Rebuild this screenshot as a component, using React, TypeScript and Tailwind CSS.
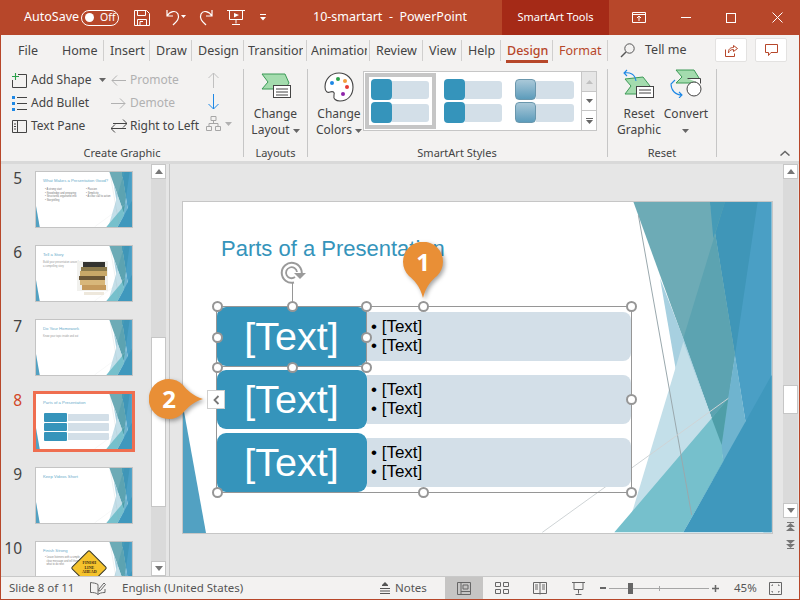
import React from "react";

const z = (pts: number[][]) => pts.map(([x, y]) => `${480 + x / 3},${195 + y / 3}`).join(" ");

function SlideArt() {
  return (
    <svg viewBox="183 202 589 331" preserveAspectRatio="none" className="absolute inset-0 w-full h-full">
      <rect x="183" y="202" width="589" height="331" fill="#fff" />
      <polygon points="183,406 206,533 183,533" fill="#52a1c2" />
      <polygon points={z([[690, 20], [875, 20], [875, 1012], [850, 1012]])} fill="#4a9fc5" />
      <polygon points={z([[690, 20], [833, 20], [765, 480]])} fill="#3f96b8" />
      <polygon points={z([[460, 20], [690, 20], [765, 480], [725, 750]])} fill="#6dabb6" />
      <polygon points={z([[735, 20], [610, 430], [725, 750], [765, 480], [690, 20]])} fill="#5ca3b1" />
      <polygon points={z([[690, 20], [735, 20], [700, 130]])} fill="#469bb7" />
      <polygon points={z([[540, 250], [610, 430], [695, 670], [625, 740], [585, 510]])} fill="#a7d0e0" />
      <polygon points={z([[610, 440], [695, 670], [435, 1012], [460, 940]])} fill="#c3dfe9" />
      <polygon points={z([[765, 480], [808, 750], [730, 800], [722, 750]])} fill="#6fb4cf" />
      <polygon points={z([[403, 1012], [695, 670], [745, 610], [725, 750], [730, 800], [610, 1012]])} fill="#76c0cc" />
      <polygon points={z([[695, 670], [745, 610], [725, 750]])} fill="#4e9ea8" />
      <polygon points={z([[610, 1012], [875, 540], [875, 1012]])} fill="#3f98bd" />
      <line x1={480 + 475 / 3} y1={195 + 60 / 3} x2={480 + 635 / 3} y2={195 + 960 / 3} stroke="#9aa8ad" strokeWidth="1" />
      <line x1={480 + 187 / 3} y1={195 + 1012 / 3} x2={480 + 745 / 3} y2={195 + 610 / 3} stroke="#cfd4d6" strokeWidth="1" />
    </svg>
  );
}

function Thumb({ n, active, children }: { n: number; active?: boolean; children?: React.ReactNode }) {
  return (
    <div className="flex h-[55px] shrink-0 items-start">
      <div className={`w-[21px] text-right text-[15.5px] leading-[20px] -mt-[4px] ${active ? "text-[#d24726]" : "text-[#444]"}`}>{n}</div>
      <div className={`relative ml-[14px] w-[96px] h-[55px] shrink-0 overflow-hidden ${active ? "outline-[3px] outline-[#ef6e50]" : "outline-1 outline-[#c4c4c4]"}`}>
        <SlideArt />
        {children}
      </div>
    </div>
  );
}

const TT = ({ children }: { children: React.ReactNode }) => (
  <div className="absolute left-[7px] top-[6px] text-[4.2px] leading-[6px] whitespace-nowrap text-[#6aaccb] font-['Liberation_Sans',sans-serif]">{children}</div>
);

function Handle({ x, y }: { x: number; y: number }) {
  return (
    <div
      className="absolute w-[11px] h-[11px] rounded-full bg-white border-2 border-[#969696]"
      style={{ left: x - 5.5, top: y - 5.5 }}
    />
  );
}

function Row() {
  return (
    <div className="flex items-center h-[59px]">
      <div className="w-[150px] h-[59px] rounded-[9px] bg-[#3594bb] text-white text-[39.5px] leading-[59px] text-center font-['Liberation_Sans',sans-serif] pb-1 pr-[1px]">
        [Text]
      </div>
      <div className="w-[264px] h-[49px] rounded-r-[8px] bg-[#d3dfe8] text-black text-[17px] leading-[19px] font-['Liberation_Sans',sans-serif] pl-[4px] py-[5px]">
        <div>• [Text]</div>
        <div>• [Text]</div>
      </div>
    </div>
  );
}

function Tab({ w, children, cls = "", sep = true }: { w: number; children: React.ReactNode; cls?: string; sep?: boolean }) {
  return (
    <div className="flex items-center h-[28px] shrink-0" style={{ width: w }}>
      <div className={`flex-1 min-w-0 overflow-hidden whitespace-nowrap pt-[3px] leading-[18px] ${cls}`}>{children}</div>
      {sep && <div className="w-px h-[21px] mt-[3px] bg-[#d0cfce] shrink-0" />}
    </div>
  );
}

function GalleryThumb({ grad, w = 58 }: { grad?: boolean; w?: number }) {
  const blue = grad
    ? "bg-gradient-to-b from-[#a9c8d8] to-[#5c9cbb] border border-[#6a97ad]"
    : "bg-[#3594bb]";
  return (
    <div className="flex flex-col gap-[2px]" style={{ width: w }}>
      {[0, 1].map((i) => (
        <div key={i} className="flex items-center h-[21px]">
          <div className={`w-[21px] h-[21px] rounded-[4px] shrink-0 ${blue}`} />
          <div className="flex-1 h-[18px] rounded-r-[3px] bg-[#d3dfe8]" />
        </div>
      ))}
    </div>
  );
}

function Caret({ color = "#666" }: { color?: string }) {
  return (
    <svg width="7" height="4" viewBox="0 0 7 4" className="inline-block align-middle">
      <polygon points="0,0 7,0 3.5,4" fill={color} />
    </svg>
  );
}

export default function App() {
  return (
    <div className="w-[800px] h-[600px] flex flex-col overflow-hidden border-x border-b border-[#b7472a] bg-[#e6e6e6] text-[#444] font-['Noto_Sans',sans-serif] text-[12px] relative">
      {/* Title bar */}
      <div className="h-[35px] shrink-0 flex items-center text-white bg-[#b7472a] -mx-px">
        <span className="ml-[24px] w-[57px] text-[12.5px]">AutoSave</span>
        <div className="w-[38px] h-[16px] rounded-full border border-white flex items-center text-[10.5px]">
          <div className="w-[9px] h-[9px] rounded-full bg-white ml-[3px]" />
          <span className="ml-[6px] leading-none">Off</span>
        </div>
        <svg width="16" height="16" viewBox="0 0 16 16" fill="none" stroke="#fff" className="ml-[15px] shrink-0">
          <path d="M.5.5h12l3 3v12H.5z M3.5.5v5h8v-5 M3.5 15.5v-6h9v6 M6 15.5v-4h3" />
        </svg>
        <svg width="24" height="18" viewBox="0 0 24 18" fill="none" stroke="#fff" strokeWidth="1.2" className="ml-[13px] shrink-0">
          <path d="M4 1v6h6 M4 7c3-5 9-6 11-2 2 5-2 8-5 11" />
          <polygon points="18,6 23,6 20.5,9" fill="#fff" stroke="none" />
        </svg>
        <svg width="16" height="18" viewBox="0 0 16 18" fill="none" stroke="#fff" strokeWidth="1.2" className="ml-[11px] shrink-0">
          <path d="M14 1v6H8 M14 7c-3-5-9-6-11-2-2 5 2 8 5 11" />
        </svg>
        <svg width="18" height="18" viewBox="0 0 18 18" fill="none" stroke="#fff" className="ml-[13px] shrink-0">
          <path d="M0 1.5h18 M2.5 1.5v9h13v-9 M9 10.5v4 M5 15.5h8" />
          <polygon points="7,4 12,6 7,8.5" fill="#fff" stroke="none" />
        </svg>
        <svg width="6" height="7" viewBox="0 0 6 7" className="ml-[15px] shrink-0">
          <path d="M0 .5h6" stroke="#fff" />
          <polygon points="0,3 6,3 3,6.5" fill="#fff" />
        </svg>
        <span className="ml-[47px] w-[189px] text-[12.5px] whitespace-pre">10-smartart  -  PowerPoint</span>
        <div className="w-[107px] h-[35px] bg-[#a52a17] flex items-center justify-center text-[11px]">SmartArt Tools</div>
        <svg width="14" height="11" viewBox="0 0 14 11" fill="none" stroke="#fff" className="ml-[23px] shrink-0">
          <path d="M.5.5h13v10H.5z M.5 2.5h13 M7 9V4 M5 6l2-2 2 2" />
        </svg>
        <div className="ml-[35px] w-[10px] h-px bg-white" />
        <div className="ml-[35px] w-[10px] h-[10px] border border-white" />
        <svg width="11" height="11" viewBox="0 0 11 11" stroke="#fff" className="ml-[36px] shrink-0">
          <path d="M.5.5l10 10 M10.5.5l-10 10" />
        </svg>
      </div>

      {/* Tabs */}
      <div className="h-[28px] shrink-0 bg-[#f3f2f1] flex items-center text-[12.5px] text-[#444] relative">
        <Tab w={61} sep={false} cls="pl-[17px]">File</Tab>
        <Tab w={42}>Home</Tab>
        <Tab w={46} cls="pl-[6px]">Insert</Tab>
        <Tab w={42} cls="pl-[6px]">Draw</Tab>
        <Tab w={52} cls="pl-[6px]">Design</Tab>
        <Tab w={63} cls="ml-[4px] mr-[3px]">Transitions</Tab>
        <Tab w={63} cls="ml-[4px] mr-[2px]">Animations</Tab>
        <Tab w={53} cls="pl-[6px]">Review</Tab>
        <Tab w={39} cls="pl-[6px]">View</Tab>
        <Tab w={39} cls="pl-[6px]">Help</Tab>
        <Tab w={52} cls="pl-[6px] text-[#b7472a]">
          <span className="font-medium">Design</span>
        </Tab>
        <Tab w={55} cls="pl-[6px] text-[#b7472a]">Format</Tab>
        <svg width="15" height="15" viewBox="0 0 15 15" fill="none" stroke="#555" className="ml-[12px] mt-[3px] shrink-0">
          <circle cx="9.5" cy="5.5" r="4.7" />
          <path d="M6 9l-5 5" strokeWidth="1.4" />
        </svg>
        <span className="ml-[10px] pt-[3px]">Tell me</span>
        <div className="absolute left-[714px] top-[3px] w-[32px] h-[24px] bg-white border border-[#e3e2e1] rounded-[2px] flex items-center justify-center">
          <svg width="13" height="13" viewBox="0 0 13 13" fill="none" stroke="#b7472a">
            <path d="M8.5 1.5l4 3-4 3v-2C5.5 5.5 4 7 3.5 9 3 5.500 5 3.500 8.500 3.500z M.5 5.500v7h9v-3" />
          </svg>
        </div>
        <div className="absolute left-[754px] top-[3px] w-[32px] h-[24px] bg-white border border-[#e3e2e1] rounded-[2px] flex items-center justify-center">
          <svg width="13" height="12" viewBox="0 0 13 12" fill="none" stroke="#b7472a">
            <path d="M.5.5h12v8H6l-2.500 3v-3h-3z" />
          </svg>
        </div>
        <div className="absolute left-[505px] bottom-0 w-[42px] h-[3px] bg-[#b7472a]" />
      </div>

      {/* Ribbon */}
      <div className="h-[98px] shrink-0 bg-[#f3f2f1] flex text-[12px] relative">
        {/* Create Graphic */}
        <div className="w-[242px] shrink-0 flex flex-col">
          <div className="flex flex-1">
            <div className="w-[110px] shrink-0 pl-[11px] pt-[7px] flex flex-col gap-[3px]">
              <div className="flex items-center h-[20px] gap-[4px] whitespace-nowrap">
                <svg width="15" height="15" viewBox="0 0 15 15" fill="none" className="shrink-0">
                  <path d="M6 1.500h8.500v13H.5V7" stroke="#444" />
                  <path d="M3.500 0v7 M0 3.500h7" stroke="#2aa14a" strokeWidth="1.100" />
                </svg>
                <span>Add Shape</span>
                <span className="ml-[4px] flex"><Caret /></span>
              </div>
              <div className="flex items-center h-[20px] gap-[4px] whitespace-nowrap">
                <svg width="15" height="15" viewBox="0 0 15 15" className="shrink-0">
                  <path d="M0 0h3v3H0z M0 6h3v3H0z M0 12h3v3H0z" fill="#1e88e5" />
                  <path d="M5 1.500h10 M5 7.500h10 M5 13.500h10" stroke="#444" />
                </svg>
                <span>Add Bullet</span>
              </div>
              <div className="flex items-center h-[20px] gap-[4px] whitespace-nowrap">
                <svg width="15" height="13" viewBox="0 0 15 13" fill="none" stroke="#444" className="shrink-0">
                  <path d="M.5.5h14v12H.5z M5.500.5v12 M2 4h2 M2 6.500h2 M2 9h2" />
                </svg>
                <span>Text Pane</span>
              </div>
            </div>
            <div className="w-[95px] shrink-0 pt-[7px] flex flex-col gap-[3px] whitespace-nowrap">
              <div className="flex items-center h-[20px] gap-[4px] text-[#b1b1b1]">
                <svg width="15" height="11" viewBox="0 0 15 11" fill="none" stroke="#b1b1b1"><path d="M15 5.500H1 M6 .5l-5 5 5 5" /></svg>
                <span>Promote</span>
              </div>
              <div className="flex items-center h-[20px] gap-[4px] text-[#b1b1b1]">
                <svg width="15" height="11" viewBox="0 0 15 11" fill="none" stroke="#b1b1b1"><path d="M0 5.500h14 M9 .5l5 5-5 5" /></svg>
                <span>Demote</span>
              </div>
              <div className="flex items-center h-[20px] gap-[3px]">
                <svg width="16" height="16" viewBox="0 0 16 16" fill="none" stroke="#444"><path d="M0 10.500h15 M4 6.500l-4 4 4 4 M16 5.500H2 M12 1.500l4 4-4 4" /></svg>
                <span>Right to Left</span>
              </div>
            </div>
            <div className="pt-[9px] flex flex-col items-start gap-[6px] pl-[2px]">
              <svg width="11" height="16" viewBox="0 0 11 16" fill="none" stroke="#c0c0c0"><path d="M5.500 16V1 M.5 6l5-5 5 5" /></svg>
              <svg width="11" height="16" viewBox="0 0 11 16" fill="none" stroke="#1e88e5"><path d="M5.500 0v15 M.5 10l5 5 5-5" /></svg>
              <div className="flex items-center gap-[4px] -ml-[2px]">
                <svg width="15" height="15" viewBox="0 0 15 15" fill="none" stroke="#a6a6a6"><path d="M5 .5h5v4H5z M.5 10.500h5v4h-5z M9.500 10.500h5v4h-5z M7.500 4.500v3 M3 10.500v-3h9v3" /></svg>
                <Caret color="#b1b1b1" />
              </div>
            </div>
          </div>
          <div className="text-center text-[11px] h-[19px] leading-[21px]">Create Graphic</div>
        </div>
        <div className="w-px h-[88px] mt-[6px] bg-[#c6c6c6] shrink-0" />
        {/* Layouts */}
        <div className="w-[63px] shrink-0 flex flex-col items-center">
          <div className="flex-1 flex flex-col items-center pt-[10px]">
            <svg width="30" height="26" viewBox="0 0 30 26" fill="none">
              <polygon points="1,1 24,1 28,10 24,16 1,16 7,9" fill="#a4dcae" stroke="#3c9a57" />
              <rect x="12.500" y="12.500" width="17" height="12" fill="#fff" stroke="#444" />
              <path d="M15 16h12 M15 19h12 M15 22h12" stroke="#444" />
            </svg>
            <div className="text-center leading-[16px] mt-[7px] whitespace-nowrap">Change<br />Layout <Caret /></div>
          </div>
          <div className="text-[11px] h-[19px] leading-[21px]">Layouts</div>
        </div>
        <div className="w-px h-[88px] mt-[6px] bg-[#c6c6c6] shrink-0" />
        {/* Styles */}
        <div className="w-[299px] shrink-0 flex flex-col">
          <div className="flex-1 pl-[55px] pt-[8px] relative">
            <div className="absolute left-[6px] top-[9px] w-[50px] flex flex-col items-center">
              <svg width="30" height="30" viewBox="0 0 30 30">
                <path d="M15 1C6 1 1 8 1 15c0 5 3 6 5 5 3-1 5 0 4 3-1 4 2 6 6 6 8 0 13-6 13-14S23 1 15 1z" fill="#fff" stroke="#444" strokeWidth="1.100" />
                <circle cx="8" cy="11" r="2" fill="#1e88e5" />
                <circle cx="14" cy="7" r="2" fill="#2aa14a" />
                <circle cx="21" cy="9" r="2" fill="#f39c3d" />
                <circle cx="23" cy="15" r="2" fill="#e53935" />
                <circle cx="19" cy="22" r="2" fill="#8e24aa" />
              </svg>
              <div className="text-center leading-[16px] mt-[4px] whitespace-nowrap">Change<br />Colors <Caret /></div>
            </div>
            <div className="w-[234px] h-[60px] bg-white border border-[#c6c6c6] flex items-center">
              <div className="w-[71px] h-[56px] ml-[1px] border-[4px] border-[#c6c6c6] flex items-center pl-[2px]">
                <GalleryThumb w={58} />
              </div>
              <div className="ml-[8px]"><GalleryThumb w={58} /></div>
              <div className="ml-[13px]"><GalleryThumb grad w={59} /></div>
              <div className="ml-auto w-[15px] h-[58px] flex flex-col border-l border-[#c6c6c6]">
                <div className="h-[20px] bg-[#e6e6e6] flex items-center justify-center border-b border-[#c6c6c6]">
                  <svg width="7" height="4" viewBox="0 0 7 4"><polygon points="0,4 7,4 3.500,0" fill="#c0c0c0" /></svg>
                </div>
                <div className="h-[19px] flex items-center justify-center border-b border-[#c6c6c6]"><Caret /></div>
                <div className="flex-1 flex flex-col items-center justify-center gap-[1px]">
                  <div className="w-[7px] h-px bg-[#666]" />
                  <Caret />
                </div>
              </div>
            </div>
          </div>
          <div className="text-center text-[11px] h-[19px] leading-[21px] pr-[1px]">SmartArt Styles</div>
        </div>
        <div className="w-px h-[88px] mt-[6px] bg-[#c6c6c6] shrink-0" />
        {/* Reset */}
        <div className="w-[108px] shrink-0 flex flex-col">
          <div className="flex-1 flex pt-[6px]">
            <div className="w-[62px] flex flex-col items-center">
              <svg width="32" height="29" viewBox="0 0 32 29" fill="none">
                <polygon points="2,10 20,8 27,17 20,25 2,25 8,17" fill="#a4dcae" stroke="#3c9a57" />
                <rect x="13.500" y="17.500" width="17" height="11" fill="#fff" stroke="#444" />
                <path d="M16 21h12 M16 24h12" stroke="#444" />
                <path d="M4 1L1 4l3 3 M1 4c6-1 11 1 12 8" stroke="#1e88e5" strokeWidth="1.100" />
              </svg>
              <div className="text-center leading-[16px] mt-[8px]">Reset<br />Graphic</div>
            </div>
            <div className="w-[46px] -ml-[7px] flex flex-col items-center">
              <svg width="32" height="29" viewBox="0 0 32 29" fill="none">
                <polygon points="6,1 24,1 29,9 24,14 6,14 12,8" fill="#a4dcae" stroke="#3c9a57" />
                <path d="M17.500 9.500h13v5" stroke="#444" fill="#fff" />
                <circle cx="24" cy="20" r="7" fill="#fff" stroke="#444" />
                <path d="M5 11L1 15c0 6 4 11 11 11 M9 23l3 3-3 3" stroke="#1e88e5" strokeWidth="1.100" />
              </svg>
              <div className="text-center leading-[16px] mt-[8px]">Convert<br /><Caret /></div>
            </div>
          </div>
          <div className="text-center text-[11px] h-[19px] leading-[21px]">Reset</div>
        </div>
        <div className="w-px h-[88px] mt-[6px] bg-[#c6c6c6] shrink-0" />
        <svg width="10" height="6" viewBox="0 0 10 6" fill="none" stroke="#666" strokeWidth="1.500" className="absolute left-[779px] top-[87px]">
          <path d="M.5 5.500l4.500-4 4.500 4" />
        </svg>
      </div>

      {/* Body */}
      <div className="flex-1 min-h-0 flex border-t-[3px] border-[#d9d9d9] border-b border-b-[#c9c9c9]">
        {/* Thumbnails */}
        <div className="w-[150px] shrink-0 overflow-hidden flex flex-col gap-[19px] pt-[8px]">
          <Thumb n={5}>
            <TT>What Makes a Presentation Good?</TT>
            <div className="absolute left-[9px] top-[16px] text-[2.6px] leading-[3.500px] text-[#777] whitespace-nowrap font-['Liberation_Sans',sans-serif]">
              <div>• A strong start</div>
              <div>• Knowledge and preparing</div>
              <div>• Structured, organized info</div>
              <div>• Storytelling</div>
            </div>
            <div className="absolute left-[50px] top-[16px] text-[2.6px] leading-[3.500px] text-[#777] whitespace-nowrap font-['Liberation_Sans',sans-serif]">
              <div>• Passion</div>
              <div>• Simplicity</div>
              <div>• A clear call to action</div>
            </div>
          </Thumb>
          <Thumb n={6}>
            <TT>Tell a Story</TT>
            <div className="absolute left-[7px] top-[15px] text-[2.6px] leading-[3.500px] text-[#999] whitespace-nowrap font-['Liberation_Sans',sans-serif]">
              <div>Build your presentation around</div>
              <div>a compelling story</div>
            </div>
            <svg viewBox="0 0 32 36" className="absolute left-[40px] top-[15px] w-[32px] h-[36px]">
              <rect x="1" y="0" width="31" height="30" fill="#f1f1ee" />
              <rect x="7" y="1" width="22" height="5" fill="#33332f" />
              <rect x="5" y="6" width="26" height="4" fill="#8b7a4b" />
              <rect x="4" y="10" width="27" height="5" fill="#c8a868" />
              <rect x="3" y="15" width="26" height="4" fill="#6a5636" />
              <rect x="4" y="19" width="25" height="5" fill="#d8b77a" />
              <rect x="6" y="24" width="24" height="5" fill="#c59a5c" />
              <rect x="8" y="31" width="20" height="3" fill="#eee8dc" />
            </svg>
          </Thumb>
          <Thumb n={7}>
            <TT>Do Your Homework</TT>
            <div className="absolute left-[7px] top-[15px] text-[2.6px] leading-[3.500px] text-[#999] whitespace-nowrap font-['Liberation_Sans',sans-serif]">Know your topic inside and out</div>
          </Thumb>
          <Thumb n={8} active>
            <TT>Parts of a Presentation</TT>
            <div className="absolute left-[8px] top-[19px] flex flex-col gap-[1px]">
              {[0, 1, 2].map((i) => (
                <div key={i} className="flex items-center h-[8.500px]">
                  <div className="w-[23px] h-[8.500px] rounded-[1px] bg-[#3594bb]" />
                  <div className="w-[41px] h-[7.500px] rounded-r-[1px] bg-[#d3dfe8] ml-[1px]" />
                </div>
              ))}
            </div>
          </Thumb>
          <Thumb n={9}>
            <TT>Keep Videos Short</TT>
          </Thumb>
          <Thumb n={10}>
            <TT>Finish Strong</TT>
            <div className="absolute left-[9px] top-[14px] text-[2.6px] leading-[3.500px] text-[#888] whitespace-nowrap font-['Liberation_Sans',sans-serif]">
              <div>• Leave listeners with a simple</div>
              <div>&nbsp;&nbsp;clear message and tell them</div>
              <div>&nbsp;&nbsp;what to do next</div>
            </div>
            <div className="absolute left-[40px] top-[13px] w-[26px] h-[26px] rotate-45 bg-[#f5c32c] border border-[#3a3a2a] rounded-[2px] flex items-center justify-center">
              <div className="-rotate-45 text-[4px] leading-[4.500px] font-bold text-center text-[#3a2a10] font-['Liberation_Serif',serif]">FINISH<br />LINE<br />AHEAD</div>
            </div>
          </Thumb>
        </div>

        {/* Thumb scrollbar */}
        <div className="w-[15px] shrink-0 bg-[#dadada] flex flex-col">
          <div className="h-[15px] bg-white border border-[#c6c6c6] flex items-center justify-center">
            <svg width="8" height="5" viewBox="0 0 8 5"><polygon points="0,5 8,5 4,0" fill="#777" /></svg>
          </div>
          <div className="h-[158px] shrink-0" />
          <div className="h-[170px] shrink-0 bg-white border border-[#c6c6c6]" />
          <div className="flex-1" />
          <div className="h-[15px] bg-white border border-[#c6c6c6] flex items-center justify-center">
            <svg width="8" height="5" viewBox="0 0 8 5"><polygon points="0,0 8,0 4,5" fill="#777" /></svg>
          </div>
        </div>
        <div className="w-[4px] shrink-0 border-r border-[#c6c6c6]" />

        {/* Canvas */}
        <div className="flex-1 min-w-0 relative pl-[13px] pt-[38px]">
          <div className="relative w-[589px] h-[331px] outline-1 outline-[#c6c6c6]">
            <SlideArt />
            <div className="absolute left-[38px] top-[33px] text-[22px] leading-[28px] text-[#3594bb] font-['Liberation_Sans',sans-serif]">Parts of a Presentation</div>
            <svg width="26" height="23" viewBox="0 0 26 23" fill="none" className="absolute left-[97px] top-[59px]">
              <path d="M14 21.500a10 10 0 1 1 7-6" stroke="#9a9a9a" strokeWidth="2" />
              <path d="M15 16a5.500 5.500 0 1 1 2-5" stroke="#9a9a9a" strokeWidth="1.800" />
              <polygon points="14,12 26,12 20,18" fill="#9a9a9a" />
            </svg>
            <div className="absolute left-[109px] top-[81px] w-px h-[24px] bg-[#969696]" />
            <div className="absolute left-[33px] top-[104px] w-[416px] h-[187px] border border-[#969696] flex flex-col gap-[4px]">
              <Row />
              <Row />
              <Row />
            </div>
            <div className="absolute left-[33px] top-[104px] w-[151px] h-[61px] border border-[#969696] rounded-[2px]" />
            <Handle x={34} y={104} />
            <Handle x={109} y={104} />
            <Handle x={183} y={104} />
            <Handle x={240} y={104} />
            <Handle x={448} y={104} />
            <Handle x={34} y={135} />
            <Handle x={183} y={135} />
            <Handle x={34} y={165} />
            <Handle x={109} y={165} />
            <Handle x={183} y={165} />
            <Handle x={448} y={197} />
            <Handle x={34} y={290} />
            <Handle x={240} y={290} />
            <Handle x={448} y={290} />
            {/* expand tab */}
            <div className="absolute left-[24px] top-[188px] w-[18px] h-[19px] bg-white border border-[#cfcfcf] flex items-center justify-center">
              <svg width="7" height="10" viewBox="0 0 7 10" fill="none" stroke="#777" strokeWidth="1.800"><path d="M5.500 1L1.500 5l4 4" /></svg>
            </div>
            {/* callouts */}
            <div className="absolute left-[220px] top-[40px] w-[40px] h-[56px]">
              <svg width="40" height="56" viewBox="0 0 40 56" className="absolute inset-0 drop-shadow-[2px_2px_2px_rgba(0,0,0,0.35)]">
                <path d="M6 34a20 20 0 1 1 28 0C29 38 23 44 20 56 17 44 11 38 6 34z" fill="#e98f36" />
              </svg>
              <div className="absolute inset-x-0 top-[4px] text-center text-white text-[24px] leading-[32px] font-bold">1</div>
            </div>
            <div className="absolute -left-[34px] top-[177px] w-[54px] h-[40px]">
              <svg width="54" height="40" viewBox="0 0 54 40" className="absolute inset-0 drop-shadow-[2px_2px_2px_rgba(0,0,0,0.35)]">
                <path d="M34 6a20 20 0 1 0 0 28c4-5 10-11 20-14C44 17 38 11 34 6z" fill="#e98f36" />
              </svg>
              <div className="absolute left-0 w-[40px] top-[4px] text-center text-white text-[24px] leading-[32px] font-bold">2</div>
            </div>
          </div>
        </div>

        {/* Right scrollbar */}
        <div className="w-[15px] shrink-0 bg-[#dadada] flex flex-col mr-px">
          <div className="h-[15px] bg-white border border-[#c6c6c6] flex items-center justify-center">
            <svg width="8" height="5" viewBox="0 0 8 5"><polygon points="0,5 8,5 4,0" fill="#777" /></svg>
          </div>
          <div className="h-[206px] shrink-0" />
          <div className="h-[29px] shrink-0 bg-white border border-[#c6c6c6]" />
          <div className="h-[89px] shrink-0" />
          <div className="h-[15px] shrink-0 bg-white border border-[#c6c6c6] flex items-center justify-center">
            <svg width="8" height="5" viewBox="0 0 8 5"><polygon points="0,0 8,0 4,5" fill="#777" /></svg>
          </div>
          <div className="flex-1 bg-[#e6e6e6] flex flex-col items-center pt-[4px] gap-[9px]">
            <svg width="9" height="9" viewBox="0 0 9 9" fill="#777"><path d="M1 0h7v1H1z" /><polygon points="0,5 9,5 4.500,1" /><polygon points="0,9 9,9 4.500,5" /></svg>
            <svg width="9" height="9" viewBox="0 0 9 9" fill="#777"><polygon points="0,0 9,0 4.500,4" /><polygon points="0,4 9,4 4.500,8" /><path d="M1 8h7v1H1z" /></svg>
          </div>
        </div>
      </div>

      {/* Status bar */}
      <div className="h-[22px] shrink-0 bg-[#f3f2f1] flex items-center text-[11.500px] text-[#555] relative">
        <span className="ml-[8px] w-[81px]">Slide 8 of 11</span>
        <svg width="16" height="13" viewBox="0 0 16 13" fill="none" stroke="#666">
          <path d="M8 2.500C6 1 3 1 .5.500v10c3 0 5.500 0 7.500 2 0 0 0-4 0-10z M8 12.500c1-1 3-2 7-2V7 M9 7l5-6 1.500 1.500-5 6-2 .5z" />
        </svg>
        <span className="ml-[16px]">English (United States)</span>
        <div className="ml-auto flex items-center">
          <svg width="12" height="12" viewBox="0 0 12 12" fill="none" stroke="#555" className="mr-[4px]"><path d="M3 3.500h6 M1 6.500h10 M1 9h10 M1 11.500h10" /><polygon points="3,3 9,3 6,0" fill="#555" stroke="none" /></svg>
          <span className="w-[50px]">Notes</span>
          <div className="w-[38px] h-[22px] bg-[#c6c5c4] flex items-center justify-center">
            <svg width="14" height="13" viewBox="0 0 14 13" fill="none" stroke="#666"><path d="M.5.500h13v12H.5z M4 .5v12 M6 3h5v4H6z M4 9.500h9.500" /></svg>
          </div>
          <div className="w-[38px] h-[22px] flex items-center justify-center">
            <svg width="14" height="12" viewBox="0 0 14 12" fill="none" stroke="#666"><path d="M.5.500h5v4h-5z M8.500.5h5v4h-5z M.5 7.500h5v4h-5z M8.500 7.500h5v4h-5z" /></svg>
          </div>
          <div className="w-[38px] h-[22px] flex items-center justify-center">
            <svg width="14" height="13" viewBox="0 0 14 13" fill="none" stroke="#666"><path d="M.5.500h13v11H.5z M7 .5v12 M2 3h3 M2 5h3 M2 7h3 M9 3h3 M9 5h3 M9 7h3" /></svg>
          </div>
          <div className="w-[38px] h-[22px] flex items-center justify-center">
            <svg width="13" height="13" viewBox="0 0 13 13" fill="none" stroke="#666"><path d="M0 .5h13 M2 .5v7h9v-7 M6.500 7.500v4 M3.500 12.500h6" /></svg>
          </div>
          <div className="w-[6px] h-[2px] bg-[#666] ml-[3px]" />
          <div className="relative w-[100px] h-px bg-[#a6a6a6] ml-[3px]">
            <div className="absolute left-[19px] -top-[5px] w-[5px] h-[11px] bg-[#666]" />
            <div className="absolute left-[50px] -top-[2px] w-px h-[5px] bg-[#a6a6a6]" />
          </div>
          <svg width="7" height="7" viewBox="0 0 7 7" className="ml-[3px]"><path d="M3.500 0v7 M0 3.500h7" stroke="#666" strokeWidth="1.500" /></svg>
          <span className="ml-[15px] w-[35px]">45%</span>
          <svg width="13" height="13" viewBox="0 0 13 13" fill="none" stroke="#666" className="mr-[17px]"><path d="M.5.500h12v12H.5z M4 3h-1v1 M9 3h1v1 M4 10h-1V9 M9 10h1V9" /></svg>
        </div>
      </div>
    </div>
  );
}
